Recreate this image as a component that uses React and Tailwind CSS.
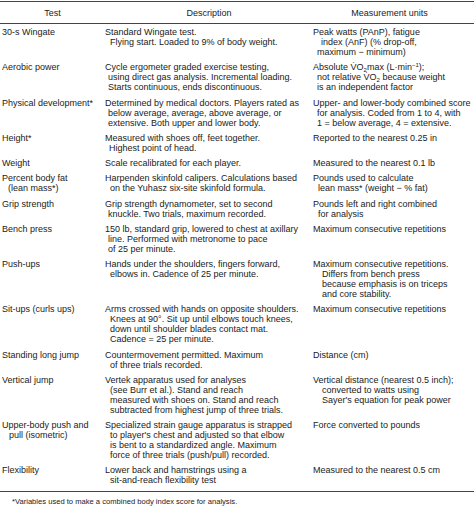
import React from "react";

const VO2 = ({ max }) => (
  <>
    V&#x307;O<sub className="text-[6px] align-baseline relative top-[2px]">2</sub>
    {max ? "max" : ""}
  </>
);

// each line: [text, indent in px]
const rows = [
  {
    test: [["30-s Wingate", 0]],
    desc: [
      ["Standard Wingate test.", 0],
      ["Flying start. Loaded to 9% of body weight.", 5],
    ],
    units: [
      ["Peak watts (PAnP), fatigue", 0],
      ["index (AnF) (% drop-off,", 8],
      ["maximum \u2212 minimum)", 4],
    ],
  },
  {
    test: [["Aerobic power", 0]],
    desc: [
      ["Cycle ergometer graded exercise testing,", 0],
      ["using direct gas analysis. Incremental loading.", 3],
      ["Starts continuous, ends discontinuous.", 3],
    ],
    units: [
      [
        <>
          Absolute <VO2 max /> (L·min
          <sup className="text-[6px]">{"\u22121"}</sup>);
        </>,
        0,
      ],
      [
        <>
          not relative <VO2 /> because weight
        </>,
        4,
      ],
      ["is an independent factor", 4],
    ],
  },
  {
    test: [["Physical development*", 0]],
    desc: [
      ["Determined by medical doctors. Players rated as", 0],
      ["below average, average, above average, or", 3],
      ["extensive. Both upper and lower body.", 3],
    ],
    units: [
      ["Upper- and lower-body combined score", 0],
      ["for analysis. Coded from 1 to 4, with", 4],
      ["1 = below average, 4 = extensive.", 4],
    ],
  },
  {
    test: [["Height*", 0]],
    desc: [
      ["Measured with shoes off, feet together.", 0],
      ["Highest point of head.", 4],
    ],
    units: [["Reported to the nearest 0.25 in", 0]],
  },
  {
    test: [["Weight", 0]],
    desc: [["Scale recalibrated for each player.", 0]],
    units: [["Measured to the nearest 0.1 lb", 0]],
  },
  {
    test: [
      ["Percent body fat", 0],
      ["(lean mass*)", 6],
    ],
    desc: [
      ["Harpenden skinfold calipers. Calculations based", 0],
      ["on the Yuhasz six-site skinfold formula.", 5],
    ],
    units: [
      ["Pounds used to calculate", 0],
      ["lean mass* (weight \u2212 % fat)", 5],
    ],
  },
  {
    test: [["Grip strength", 0]],
    desc: [
      ["Grip strength dynamometer, set to second", 0],
      ["knuckle. Two trials, maximum recorded.", 3],
    ],
    units: [
      ["Pounds left and right combined", 0],
      ["for analysis", 5],
    ],
  },
  {
    test: [["Bench press", 0]],
    desc: [
      ["150 lb, standard grip, lowered to chest at axillary", 0],
      ["line. Performed with metronome to pace", 3],
      ["of 25 per minute.", 3],
    ],
    units: [["Maximum consecutive repetitions", 0]],
  },
  {
    test: [["Push-ups", 0]],
    desc: [
      ["Hands under the shoulders, fingers forward,", 0],
      ["elbows in. Cadence of 25 per minute.", 5],
    ],
    units: [
      ["Maximum consecutive repetitions.", 0],
      ["Differs from bench press", 9],
      ["because emphasis is on triceps", 9],
      ["and core stability.", 9],
    ],
  },
  {
    test: [["Sit-ups (curls ups)", 0]],
    desc: [
      ["Arms crossed with hands on opposite shoulders.", 0],
      ["Knees at 90°. Sit up until elbows touch knees,", 5],
      ["down until shoulder blades contact mat.", 5],
      ["Cadence = 25 per minute.", 5],
    ],
    units: [["Maximum consecutive repetitions", 0]],
  },
  {
    test: [["Standing long jump", 0]],
    desc: [
      ["Countermovement permitted. Maximum", 0],
      ["of three trials recorded.", 5],
    ],
    units: [["Distance (cm)", 0]],
  },
  {
    test: [["Vertical jump", 0]],
    desc: [
      ["Vertek apparatus used for analyses", 0],
      ["(see Burr et al.). Stand and reach", 5],
      ["measured with shoes on. Stand and reach", 5],
      ["subtracted from highest jump of three trials.", 5],
    ],
    units: [
      ["Vertical distance (nearest 0.5 inch);", 0],
      ["converted to watts using", 9],
      ["Sayer's equation for peak power", 9],
    ],
  },
  {
    test: [
      ["Upper-body push and", 0],
      ["pull (isometric)", 7],
    ],
    desc: [
      ["Specialized strain gauge apparatus is strapped", 0],
      ["to player's chest and adjusted so that elbow", 5],
      ["is bent to a standardized angle. Maximum", 5],
      ["force of three trials (push/pull) recorded.", 5],
    ],
    units: [["Force converted to pounds", 0]],
  },
  {
    test: [["Flexibility", 0]],
    desc: [
      ["Lower back and hamstrings using a", 0],
      ["sit-and-reach flexibility test", 5],
    ],
    units: [["Measured to the nearest 0.5 cm", 0]],
  },
];

function Cell({ lines }) {
  return (
    <div>
      {lines.map(([text, indent], i) => (
        <div key={i} className="whitespace-nowrap" style={{ paddingLeft: indent }}>
          {text}
        </div>
      ))}
    </div>
  );
}

export default function App() {
  return (
    <div
      className="w-[474px] h-[507px] overflow-hidden bg-white text-[#222] text-[9px] leading-[10px]"
      style={{ fontFamily: '"Liberation Sans", Arial, sans-serif' }}
    >
      <div className="mt-px border-t border-[#444]">
        <div className="grid grid-cols-[105px_208px_1fr] pt-[6px] pb-[5px] text-center">
          <div>Test</div>
          <div>Description</div>
          <div className="pr-[8px]">Measurement units</div>
        </div>

        <div className="border-t border-[#444] pb-[4px]">
          {rows.map((row, i) => (
            <div
              key={i}
              className={
                "grid grid-cols-[103px_208px_1fr] pl-[2px] pb-[2px] " +
                (i === 0 ? "pt-[3px]" : "pt-[3.25px]")
              }
            >
              <Cell lines={row.test} />
              <Cell lines={row.desc} />
              <Cell lines={row.units} />
            </div>
          ))}
        </div>

        <div className="border-t border-[#444] pt-[5px] pl-[12px] text-[7.6px] leading-[9px] whitespace-nowrap">
          *Variables used to make a combined body index score for analysis.
        </div>
      </div>
    </div>
  );
}
